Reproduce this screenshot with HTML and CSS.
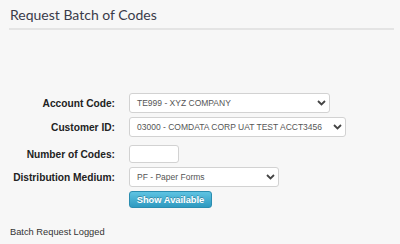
FILE: index.html
```html
<!DOCTYPE html>
<html lang="en">
<head>
  <meta charset="UTF-8">
  <title>Request Batch of Codes</title>
  <link rel="stylesheet" href="styles.css">
</head>
<body>
  <div class="page">
    <h1 class="title">Request Batch of Codes</h1>

    <!-- Formulario -->
    <div class="form">
      <div class="row">
        <label class="label">Account Code:</label>
        <div class="select select-account">
          <span>TE999 - XYZ COMPANY</span>
          <svg class="chev" width="9" height="6" viewBox="0 0 9 6"><path d="M1 1l3.5 3.5L8 1" fill="none" stroke="#444" stroke-width="1.8"/></svg>
        </div>
      </div>
      <div class="row">
        <label class="label">Customer ID:</label>
        <div class="select select-customer">
          <span>03000 - COMDATA CORP UAT TEST ACCT3456</span>
          <svg class="chev" width="9" height="6" viewBox="0 0 9 6"><path d="M1 1l3.5 3.5L8 1" fill="none" stroke="#444" stroke-width="1.8"/></svg>
        </div>
      </div>
      <div class="row row-gap">
        <label class="label">Number of Codes:</label>
        <div class="input"></div>
      </div>
      <div class="row">
        <label class="label">Distribution Medium:</label>
        <div class="select select-medium">
          <span>PF - Paper Forms</span>
          <svg class="chev" width="9" height="6" viewBox="0 0 9 6"><path d="M1 1l3.5 3.5L8 1" fill="none" stroke="#444" stroke-width="1.8"/></svg>
        </div>
      </div>
      <div class="row">
        <span class="label"></span>
        <button class="btn">Show Available</button>
      </div>
    </div>

    <p class="status">Batch Request Logged</p>
  </div>
</body>
</html>
```

FILE: styles.css
```css
/* Estilos generales */
body {
  margin: 0;
  background: #f7f7f7;
  font-family: "Liberation Sans", Arial, sans-serif;
  color: #333;
}

.page {
  padding: 6px 6px 0 9px;
}

.title {
  margin: 0;
  padding: 0 0 5px 1px;
  font-family: Lato, sans-serif;
  font-weight: 400;
  font-size: 14px;
  line-height: 17px;
  color: #3a3b4a;
  border-bottom: 2px solid #e4e4e4;
}

/* Formulario */
.form {
  margin-top: 63px;
  display: flex;
  flex-direction: column;
  gap: 4px;
}

.row {
  display: flex;
  align-items: center;
  gap: 14px;
}

.row-gap {
  margin-top: 4px;
}

.label {
  width: 106px;
  flex: none;
  text-align: right;
  white-space: nowrap;
  font-weight: 700;
  font-size: 10.2px;
  color: #222;
}

.select {
  height: 20px;
  box-sizing: border-box;
  background: #fff;
  border: 1px solid #d2d2d2;
  border-radius: 3px;
  display: flex;
  align-items: center;
  justify-content: space-between;
  padding: 0 3px 0 7px;
  white-space: nowrap;
  font-size: 8.5px;
  color: #555;
}

.select-account { width: 201px; }
.select-customer { width: 217px; }
.select-medium { width: 150px; }

.chev {
  flex: none;
}

.input {
  width: 50px;
  height: 18px;
  box-sizing: border-box;
  background: #fff;
  border: 1px solid #d2d2d2;
  border-radius: 3px;
}

.btn {
  width: 83px;
  height: 17px;
  padding: 0;
  border: 1px solid #2b8db0;
  border-radius: 3px;
  background: linear-gradient(#5ec3e2, #2f9ac0);
  color: #fff;
  font-family: "Liberation Sans", Arial, sans-serif;
  font-weight: 700;
  font-size: 9.3px;
  text-shadow: 0 -1px 0 rgba(0, 0, 0, 0.25);
}

.status {
  margin: 19px 0 0 1px;
  font-size: 9.3px;
  color: #333;
}
```
